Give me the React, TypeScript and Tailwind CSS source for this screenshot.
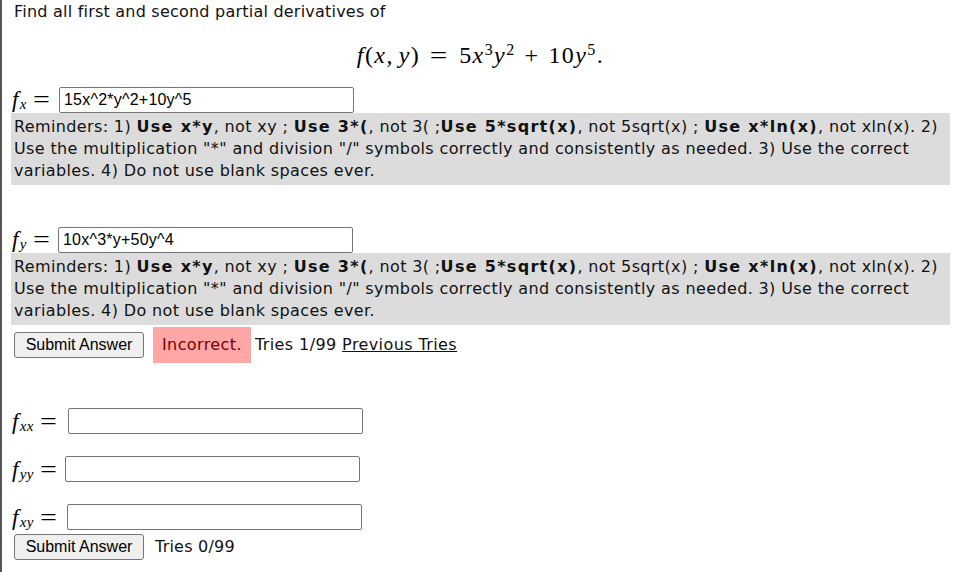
const inputCls =
  "h-[26px] w-[295px] rounded-[2px] border border-[#767676] bg-white px-[4px] font-['Liberation_Sans',Arial,sans-serif] text-[16px] text-black outline-none"

const buttonCls =
  "h-[26px] w-[130px] rounded-[3px] border border-[#767676] bg-[#efefef] font-['Liberation_Sans',Arial,sans-serif] text-[16px] leading-none tracking-normal text-black"

const MathLabel = ({ sub, width }: { sub: string; width: string }) => (
  <span
    className={`inline-flex shrink-0 items-baseline font-['Liberation_Serif','DejaVu_Serif',serif] text-[23px] leading-none text-black ${width}`}
  >
    <span className="italic">f</span>
    <sub className="relative top-[2px] ml-[1px] text-[15px] italic leading-none tracking-[0.5px]">{sub}</sub>
    <span className="ml-[8px] scale-x-[1.3]">=</span>
  </span>
)

const Reminders = () => (
  <div className="bg-[#dcdcdc] px-[3px] py-[3px] text-[16px] leading-[22px] tracking-[0.37px] text-[#111] whitespace-nowrap">
    Reminders: 1) <b className="tracking-[1.3px]">Use x*y</b>, not xy ; <b className="tracking-[1.3px]">Use 3*(</b>, not 3(
    ;<b className="tracking-[1.3px]">Use 5*sqrt(x)</b>, not 5sqrt(x) ; <b className="tracking-[1.3px]">Use x*ln(x)</b>,
    not xln(x). 2)
    <br />
    Use the multiplication "*" and division "/" symbols correctly and consistently as needed. 3) Use the correct
    <br />
    variables. 4) Do not use blank spaces ever.
  </div>
)

export default function App() {
  return (
    <div className="min-h-[572px] border-l-2 border-[#555] bg-white pl-[9px] pr-[3px] font-['DejaVu_Sans',Verdana,sans-serif] text-[16px] tracking-[0.22px] text-[#111]">
      {/* question */}
      <p className="pl-[3px] pt-[1px] leading-[22px]">Find all first and second partial derivatives of</p>

      <div className="mt-[14px] flex h-[36px] items-center justify-center font-['Liberation_Serif','DejaVu_Serif',serif] text-[24px] tracking-[1.4px] text-black">
        <span>
          <i>f</i>(<i>x</i>,<span className="ml-[5px]" />
          <i>y</i>)<span className="mx-[12px] inline-block scale-x-[1.3]">=</span>5<i>x</i>
          <sup className="text-[16px]">3</sup>
          <i>y</i>
          <sup className="text-[16px]">2</sup>
          <span className="mx-[9px]">+</span>10<i>y</i>
          <sup className="text-[16px]">5</sup>.
        </span>
      </div>

      {/* f_x */}
      <div className="mt-[14px] flex h-[25px] items-center pl-[1px]">
        <MathLabel sub="x" width="w-[47px]" />
        <input className={inputCls} defaultValue="15x^2*y^2+10y^5" />
      </div>
      <div className="mt-[1px]">
        <Reminders />
      </div>

      {/* f_y */}
      <div className="mt-[42px] flex h-[25px] items-center pl-[1px]">
        <MathLabel sub="y" width="w-[46px]" />
        <input className={inputCls} defaultValue="10x^3*y+50y^4" />
      </div>
      <div className="mt-[1px]">
        <Reminders />
      </div>

      <div className="mt-[2px] flex items-center pl-[3px] tracking-[0.4px]">
        <button className={buttonCls}>Submit Answer</button>
        <span className="ml-[9px] flex h-[36px] items-center bg-[#ffa6a6] px-[9px] text-[#7a0000]">Incorrect.</span>
        <span className="ml-[4px]">
          Tries 1/99 <a className="cursor-pointer underline">Previous Tries</a>
        </span>
      </div>

      {/* second partials */}
      <div className="mt-[45px] flex h-[26px] items-center pl-[1px]">
        <MathLabel sub="xx" width="w-[56px]" />
        <input className={inputCls} />
      </div>
      <div className="mt-[22px] flex h-[26px] items-center pl-[1px]">
        <MathLabel sub="yy" width="w-[53px]" />
        <input className={inputCls} />
      </div>
      <div className="mt-[22px] flex h-[26px] items-center pl-[1px]">
        <MathLabel sub="xy" width="w-[55px]" />
        <input className={inputCls} />
      </div>
      <div className="mt-[4px] flex items-center pl-[3px]">
        <button className={buttonCls}>Submit Answer</button>
        <span className="ml-[11px]">Tries 0/99</span>
      </div>
    </div>
  )
}
